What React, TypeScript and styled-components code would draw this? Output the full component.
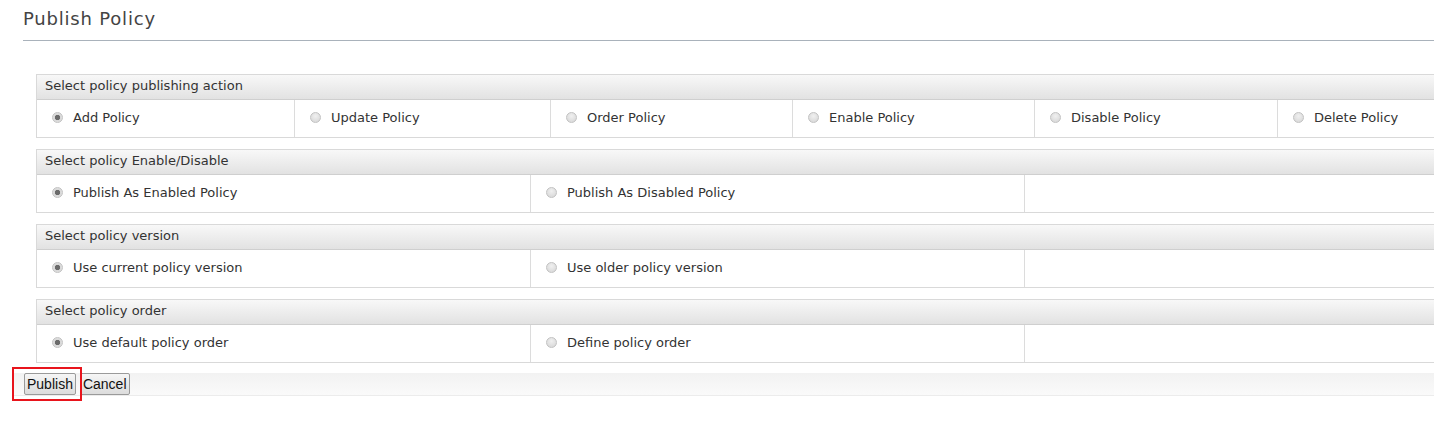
import React from "react";
import styled, { createGlobalStyle } from "styled-components";

const Global = createGlobalStyle`
  html, body { margin: 0; padding: 0; background: #fff; }
  body { font-family: "DejaVu Sans", Verdana, sans-serif; color: #333; overflow: hidden; }
`;

const Page = styled.div`
  width: 1444px;
  height: 429px;
  overflow: hidden;
  position: relative;
`;

const TitleBar = styled.div`
  margin: 0 10px 0 23px;
  height: 41px;
  border-bottom: 1px solid #a9b2bb;
  box-sizing: border-box;
`;

const Title = styled.h2`
  margin: 0;
  padding-top: 7px;
  font-size: 18px;
  letter-spacing: 0.8px;
  font-weight: normal;
  color: #444;
  line-height: 24px;
`;

const Content = styled.div`
  padding: 33px 10px 0 36px;
  display: flex;
  flex-direction: column;
  gap: 11px;
`;

const Section = styled.div`
  width: 1398px;
  border: 1px solid #d9d9d9;
  border-right: none;
  box-sizing: border-box;
`;

const SectionHeader = styled.div`
  height: 25px;
  line-height: 22px;
  padding-left: 8px;
  font-size: 13px;
  color: #333;
  background: linear-gradient(#f8f8f8, #e2e2e2);
  border-bottom: 1px solid #cfcfcf;
  box-sizing: border-box;
`;

const Row = styled.div<{ $cols: string }>`
  display: grid;
  grid-template-columns: ${(p) => p.$cols};
  height: 37px;
`;

const Cell = styled.label`
  display: flex;
  align-items: center;
  padding: 0 0 2px 15px;
  font-size: 13px;
  color: #333;
  border-left: 1px solid #dcdcdc;
  &:first-child { border-left: none; }
`;

const Radio = styled.span<{ $on?: boolean }>`
  width: 11px;
  height: 11px;
  border-radius: 50%;
  margin-right: 10px;
  margin-top: -1px;
  box-sizing: border-box;
  background: ${(p) =>
    p.$on
      ? "radial-gradient(circle, #6a6a6a 0 2.3px, #d8d8d8 3px, #e6e6e6 100%)"
      : "radial-gradient(circle at 50% 35%, #f0f0f0, #d4d4d4)"};
  border: 1px solid #c2c2c2;
`;

const ButtonBar = styled.div`
  margin: 10px 10px 0 12px;
  height: 22px;
  display: flex;
  align-items: center;
  gap: 4px;
  padding-left: 12px;
  background: linear-gradient(#f2f2f2, #fafafa);
  border-bottom: 1px solid #ececec;
  position: relative;
`;

const Button = styled.button`
  font-family: "Liberation Sans", Arial, sans-serif;
  font-size: 14px;
  color: #111;
  height: 22px;
  padding: 0 2px;
  background: linear-gradient(#f6f6f6, #dcdcdc);
  border: 1px solid #9a9a9a;
  border-radius: 2px;
  line-height: 20px;
`;

const Highlight = styled.div`
  position: absolute;
  left: 0;
  top: -6px;
  width: 70px;
  height: 34px;
  border: 2px solid #e8141c;
  box-sizing: border-box;
  pointer-events: none;
`;

type Sec = { title: string; cols: string; items: string[] };

const sections: Sec[] = [
  {
    title: "Select policy publishing action",
    cols: "257px 256px 242px 242px 243px 157px",
    items: ["Add Policy", "Update Policy", "Order Policy", "Enable Policy", "Disable Policy", "Delete Policy"],
  },
  {
    title: "Select policy Enable/Disable",
    cols: "493px 494px 410px",
    items: ["Publish As Enabled Policy", "Publish As Disabled Policy", ""],
  },
  {
    title: "Select policy version",
    cols: "493px 494px 410px",
    items: ["Use current policy version", "Use older policy version", ""],
  },
  {
    title: "Select policy order",
    cols: "493px 494px 410px",
    items: ["Use default policy order", "Define policy order", ""],
  },
];

export default function App() {
  return (
    <Page>
      <Global />
      <TitleBar>
        <Title>Publish Policy</Title>
      </TitleBar>
      <Content>
        {sections.map((s) => (
          <Section key={s.title}>
            <SectionHeader>{s.title}</SectionHeader>
            <Row $cols={s.cols}>
              {s.items.map((it, i) => (
                <Cell key={i}>
                  {it && <Radio $on={i === 0} />}
                  {it}
                </Cell>
              ))}
            </Row>
          </Section>
        ))}
      </Content>
      <ButtonBar>
        <Highlight />
        <Button>Publish</Button>
        <Button>Cancel</Button>
      </ButtonBar>
    </Page>
  );
}
